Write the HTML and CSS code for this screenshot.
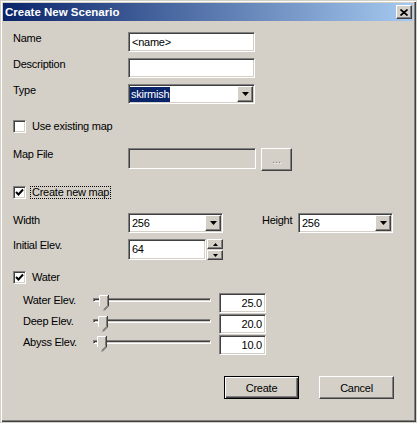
FILE: index.html
```html
<!DOCTYPE html>
<html>
<head>
<meta charset="utf-8">
<link rel="stylesheet" href="styles.css">
</head>
<body>
<div class="window">
  <div class="caption">
    <span class="title">Create New Scenario</span>
    <div class="close btn3d"><svg width="8" height="7" viewBox="0 0 8 7"><path d="M0.5 0.5 L7.5 6.5 M7.5 0.5 L0.5 6.5" stroke="#000" stroke-width="1.7" fill="none"/></svg></div>
  </div>
  <div class="content">
    <div class="row r-name"><span class="label">Name</span><div class="sunken text w127"><span>&lt;name&gt;</span></div></div>
    <div class="row r-gap6"><span class="label">Description</span><div class="sunken text w127"></div></div>
    <div class="row r-gap6"><span class="label">Type</span>
      <div class="sunken select w127"><span class="value"><span class="hl">skirmish</span></span><span class="arrow btn3d"><svg width="7" height="4" viewBox="0 0 7 4"><path d="M0 0 H7 L3.5 4 Z" fill="#000"/></svg></span></div>
    </div>
    <div class="row check r-check1"><span class="box sunken white"></span><span class="ctext">Use existing map</span></div>
    <div class="row r-map"><span class="label">Map File</span><div class="sunken text disabled w128"></div><div class="btn3d dots">...</div></div>
    <div class="row check r-check2"><span class="box sunken white"><svg width="9" height="9" viewBox="0 0 9 9"><polyline points="1,4 3.5,6.5 8,1.5" stroke="#000" stroke-width="2" fill="none"/></svg></span><span class="ctext focus">Create new map</span></div>
    <div class="row r-size">
      <span class="label pad1">Width</span>
      <div class="sunken select w95"><span class="value">256</span><span class="arrow btn3d"><svg width="7" height="4" viewBox="0 0 7 4"><path d="M0 0 H7 L3.5 4 Z" fill="#000"/></svg></span></div>
      <span class="label pad1 hlabel">Height</span>
      <div class="sunken select w95"><span class="value">256</span><span class="arrow btn3d"><svg width="7" height="4" viewBox="0 0 7 4"><path d="M0 0 H7 L3.5 4 Z" fill="#000"/></svg></span></div>
    </div>
    <div class="row r-gap6"><span class="label">Initial Elev.</span><div class="sunken text w78 h21"><span>64</span></div>
      <div class="spin"><span class="btn3d sbtn"><svg width="5" height="3" viewBox="0 0 5 3"><path d="M0 3 H5 L2.5 0 Z" fill="#000"/></svg></span><span class="btn3d sbtn"><svg width="5" height="3" viewBox="0 0 5 3"><path d="M0 0 H5 L2.5 3 Z" fill="#000"/></svg></span></div>
    </div>
    <div class="row check r-water"><span class="box sunken white"><svg width="9" height="9" viewBox="0 0 9 9"><polyline points="1,4 3.5,6.5 8,1.5" stroke="#000" stroke-width="2" fill="none"/></svg></span><span class="ctext">Water</span></div>
    <div class="row sub r-sub1"><span class="slabel">Water Elev.</span>
      <div class="slider"><div class="track"></div><svg class="thumb" style="left:6px;top:2px" width="10" height="16" viewBox="0 0 10 16"><path d="M0 0 H9 V11 L4.5 15.5 L0 11 Z" fill="#d4d0c8"/><polyline points="0.5,11 0.5,0.5 8.5,0.5" stroke="#fff" fill="none"/><polyline points="9.5,0 9.5,11 5,15.5" stroke="#404040" fill="none"/><polyline points="8.5,1 8.5,10.6 4.6,14.4" stroke="#808080" fill="none"/></svg></div>
      <div class="sunken text num"><span>25.0</span></div>
    </div>
    <div class="row sub r-sub"><span class="slabel">Deep Elev.</span>
      <div class="slider"><div class="track"></div><svg class="thumb" style="left:5px;top:2px" width="10" height="16" viewBox="0 0 10 16"><path d="M0 0 H9 V11 L4.5 15.5 L0 11 Z" fill="#d4d0c8"/><polyline points="0.5,11 0.5,0.5 8.5,0.5" stroke="#fff" fill="none"/><polyline points="9.5,0 9.5,11 5,15.5" stroke="#404040" fill="none"/><polyline points="8.5,1 8.5,10.6 4.6,14.4" stroke="#808080" fill="none"/></svg></div>
      <div class="sunken text num"><span>20.0</span></div>
    </div>
    <div class="row sub r-sub"><span class="slabel">Abyss Elev.</span>
      <div class="slider"><div class="track"></div><svg class="thumb" style="left:4px;top:1px" width="10" height="16" viewBox="0 0 10 16"><path d="M0 0 H9 V11 L4.5 15.5 L0 11 Z" fill="#d4d0c8"/><polyline points="0.5,11 0.5,0.5 8.5,0.5" stroke="#fff" fill="none"/><polyline points="9.5,0 9.5,11 5,15.5" stroke="#404040" fill="none"/><polyline points="8.5,1 8.5,10.6 4.6,14.4" stroke="#808080" fill="none"/></svg></div>
      <div class="sunken text num"><span>10.0</span></div>
    </div>
    <div class="row buttons">
      <div class="pbtn default">Create</div>
      <div class="pbtn btn3d">Cancel</div>
    </div>
  </div>
</div>
</body>
</html>
```

FILE: styles.css
```css
* { box-sizing: border-box; }
body {
  margin: 0;
  background: #d4d0c8;
  font-family: "Liberation Sans", Arial, sans-serif;
  font-size: 11px;
  letter-spacing: -0.25px;
  color: #000;
}
.window {
  width: 416px;
  height: 422px;
  padding: 3px;
  background: #d4d0c8;
  box-shadow: inset 1px 1px #d4d0c8, inset 2px 2px #fff, inset -1px -1px #404040, inset -2px -2px #808080;
  display: flex;
  flex-direction: column;
}
.caption {
  height: 18px;
  flex: none;
  background: linear-gradient(to right, #0a246a, #a6caf0);
  display: flex;
  align-items: center;
  justify-content: space-between;
  padding: 0 1px 0 2px;
}
.title {
  color: #fff;
  font-weight: bold;
  font-size: 11.5px;
  letter-spacing: 0;
}
.btn3d {
  background: #d4d0c8;
  border: 1px solid;
  border-color: #fff #404040 #404040 #fff;
  box-shadow: inset -1px -1px #808080;
  display: flex;
  align-items: center;
  justify-content: center;
}
.close { width: 16px; height: 14px; }
.content {
  padding: 11px 0 0 10px;
  display: flex;
  flex-direction: column;
}
.row { display: flex; align-items: flex-start; flex: none; }
.label { width: 115px; line-height: 13px; white-space: nowrap; flex: none; }
.pad1 { padding-top: 1px; }
.sunken {
  border: 1px solid;
  border-color: #808080 #fff #fff #808080;
  box-shadow: inset 1px 1px #404040, inset -1px -1px #d4d0c8;
  background: #fff;
}
.text {
  height: 20px;
  padding: 0 3px;
  line-height: 18px;
  white-space: nowrap;
}
.w127 { width: 127px; }
.w128 { width: 128px; height: 21px; }
.w95 { width: 95px; }
.w78 { width: 78px; }
.h21 { height: 21px; line-height: 19px; }
.disabled { background: #d4d0c8; }
.select {
  height: 20px;
  padding: 1px;
  display: flex;
}
.select .value {
  flex: 1;
  line-height: 16px;
  padding-left: 2px;
  white-space: nowrap;
}
.select .arrow { width: 16px; height: 16px; flex: none; }
.hl {
  display: inline-block;
  background: #0a246a;
  color: #fff;
  line-height: 15px;
  margin-left: -2px;
  padding: 0 1px;
}
.r-gap6 { margin-top: 6px; }
.check { align-items: center; height: 13px; }
.box {
  width: 13px;
  height: 13px;
  display: flex;
  align-items: center;
  justify-content: center;
  flex: none;
}
.ctext {
  margin-left: 4px;
  border: 1px dotted transparent;
  padding: 0 1px;
  line-height: 11px;
}
.focus { border-color: #000; }
.r-check1 { margin-top: 16px; }
.r-map { margin-top: 15px; height: 23px; }
.dots {
  width: 31px;
  height: 23px;
  margin-left: 5px;
  color: #808080;
  text-shadow: 1px 1px #fff;
  line-height: 21px;
}
.r-check2 { margin-top: 15px; }
.r-size { margin-top: 14px; }
.hlabel { width: 36px; margin-left: 39px; }
.spin {
  display: flex;
  flex-direction: column;
  gap: 1px;
  margin-left: 1px;
}
.sbtn { width: 16px; height: 10px; }
.r-water { margin-top: 11px; }
.sub { padding-left: 10px; height: 20px; }
.r-sub1 { margin-top: 9px; }
.r-sub { margin-top: 1px; }
.slabel { width: 70px; line-height: 13px; padding-top: 1px; white-space: nowrap; flex: none; }
.slider {
  position: relative;
  width: 118px;
  height: 20px;
  flex: none;
}
.track {
  margin-top: 5px;
  height: 4px;
  border: 1px solid;
  border-color: #808080 #fff #fff #808080;
  box-shadow: inset 1px 1px #404040;
  background: #d4d0c8;
}
.thumb { position: absolute; }
.num {
  width: 47px;
  margin-left: 8px;
  text-align: right;
}
.buttons {
  margin-top: 21px;
  padding-left: 211px;
  gap: 20px;
}
.pbtn {
  width: 75px;
  height: 23px;
  display: flex;
  align-items: center;
  justify-content: center;
}
.default {
  border: 1px solid #000;
  background: #d4d0c8;
  box-shadow: inset 1px 1px #fff, inset -1px -1px #404040, inset -2px -2px #808080;
}
```
